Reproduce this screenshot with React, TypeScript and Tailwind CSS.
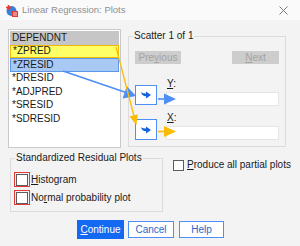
import React from "react";

const vars = ["DEPENDNT", "*ZPRED", "*ZRESID", "*DRESID", "*ADJPRED", "*SRESID", "*SDRESID"];

const MoveIcon = () => (
  <svg width="10" height="8" viewBox="0 0 10 8">
    <path d="M0 1.2 Q1 5.2 5 5.2 L5 7.6 L10 4 L5 0.4 L5 2.6 Q2 2.6 0 1.2Z" fill="#1462dc" />
  </svg>
);

const Box = () => <span className="block w-[12px] h-[12px] border border-[#5c5c5c] bg-white" />;

const App: React.FC = () => {
  return (
    <div className="relative w-[300px] h-[246px] overflow-hidden bg-[#f3f3f3] text-[10px] leading-[12px] text-[#1a1a1a] font-['Liberation_Sans',Arial,sans-serif]">
      {/* title bar */}
      <div className="h-[20px] bg-[#fafafa] flex items-center">
        <svg className="ml-[5px]" width="13" height="13" viewBox="0 0 13 13">
          <circle cx="6.5" cy="7" r="5" fill="#3c7fd6" />
          <path d="M1 3.5 H6 M3.5 1 V6" stroke="#e53935" strokeWidth="1.6" />
          <rect x="7" y="7" width="6" height="6" fill="#e53935" />
          <path d="M8 9 H12 M8 11 H12" stroke="#fff" strokeWidth="0.8" />
        </svg>
        <span className="ml-[4px] text-[9.5px] text-[#8f8f8f]">Linear Regression: Plots</span>
        <svg className="ml-auto mr-[12px]" width="9" height="9" viewBox="0 0 9 9">
          <path d="M0.5 0.5 L8.5 8.5 M8.5 0.5 L0.5 8.5" stroke="#7a7a7a" strokeWidth="1" />
        </svg>
      </div>

      {/* variables + scatter */}
      <div className="flex items-start">
        <div className="ml-[8px] mt-[9px] w-[113px] h-[119px] bg-white border border-[#c9c9c9] pt-[1px] px-[1px]">
          {vars.map((v, i) => (
            <div
              key={v}
              className={
                "h-[13.5px] pl-[2px] flex items-center " +
                (i === 0
                  ? "bg-[#c6c6c6]"
                  : i === 1
                  ? "bg-[#ffff66] border border-[#f2b705]"
                  : i === 2
                  ? "bg-[#a9c9f5] border border-[#5b97ea]"
                  : "")
              }
            >
              {v}
            </div>
          ))}
        </div>

        <fieldset className="ml-[7px] mt-[10px] w-[158px] border border-[#dcdcdc] px-[6px] pb-[6px]">
          <legend className="ml-[-2px] px-[1px]">Scatter 1 of 1</legend>
          <div className="mt-[9px] flex justify-between">
            <div className="w-[46px] h-[13px] bg-[#cdcdcd] text-[#a3a3a3] flex items-center justify-center">
              <span>
                Pre<span className="underline">v</span>ious
              </span>
            </div>
            <div className="w-[47px] h-[13px] bg-[#cdcdcd] text-[#a3a3a3] flex items-center justify-center">
              <span>
                <span className="underline">N</span>ext
              </span>
            </div>
          </div>

          <div className="mt-[13.5px] flex items-end">
            <div className="w-[22px] h-[20px] mb-[1px] border border-[#4d8ef7] bg-white flex items-center justify-center">
              <MoveIcon />
            </div>
            <div className="ml-[9px] flex flex-col">
              <span className="pl-[1px] h-[12px]">
                <span className="underline">Y</span>:
              </span>
              <div className="mt-[2.5px] w-[113px] h-[14px] bg-white border border-[#e6e6e6]" />
            </div>
          </div>

          <div className="mt-[5.5px] flex items-end">
            <div className="w-[22px] h-[21px] border border-[#4d8ef7] bg-white flex items-center justify-center">
              <MoveIcon />
            </div>
            <div className="ml-[9px] flex flex-col">
              <span className="pl-[1px] h-[12px]">
                <span className="underline">X</span>:
              </span>
              <div className="mt-[2.5px] w-[113px] h-[14px] bg-white border border-[#e6e6e6]" />
            </div>
          </div>
        </fieldset>
      </div>

      {/* residual plots + partial */}
      <div className="flex items-start mt-[4px]">
        <fieldset className="ml-[10px] w-[153px] border border-[#dcdcdc] pl-[3px] pb-[6px]">
          <legend className="ml-[1px] px-[1px]">Standardized Residual Plots</legend>
          <div className="mt-[8px] flex items-center">
            <span className="w-[16px] h-[15px] border border-[#e53935] flex items-center justify-center">
              <Box />
            </span>
            <span className="ml-[1px]">
              <span className="underline">H</span>istogram
            </span>
          </div>
          <div className="mt-[3px] flex items-center">
            <span className="w-[16px] h-[15px] border border-[#e53935] flex items-center justify-center">
              <Box />
            </span>
            <span className="ml-[1px]">
              No<span className="underline">r</span>mal probability plot
            </span>
          </div>
        </fieldset>

        <div className="ml-[10px] mt-[7px] flex items-center">
          <span className="block w-[11px] h-[11px] border border-[#5c5c5c] bg-white" />
          <span className="ml-[3px]">
            <span className="underline">P</span>roduce all partial plots
          </span>
        </div>
      </div>

      {/* buttons */}
      <div className="mt-[8px] flex items-center justify-center pl-[1px]">
        <div className="w-[47px] h-[19px] bg-[#1469f2] text-white flex items-center justify-center">
          <span>
            <span className="underline">C</span>ontinue
          </span>
        </div>
        <div className="ml-[4px] w-[46px] h-[17px] bg-white border border-[#4d8ef7] text-[#2a66cc] flex items-center justify-center">
          Cancel
        </div>
        <div className="ml-[5px] w-[45px] h-[17px] bg-white border border-[#4d8ef7] text-[#2a66cc] flex items-center justify-center">
          Help
        </div>
      </div>

      {/* connector arrows drawn over the dialog */}
      <svg className="absolute left-0 top-0 pointer-events-none" width="300" height="246" viewBox="0 0 300 246">
        <line x1="63" y1="71" x2="126" y2="92.5" stroke="#4d8ef7" strokeWidth="1.6" />
        <polygon points="136,96 122.6,98.4 126.8,86.2" fill="#4d8ef7" />
        <line x1="158" y1="99" x2="165" y2="99" stroke="#4d8ef7" strokeWidth="1.6" />
        <polygon points="164,93.5 176,99 164,104.5" fill="#4d8ef7" />

        <line x1="116" y1="47" x2="134" y2="116" stroke="#fbbc04" strokeWidth="1.3" />
        <polygon points="136.5,125 129.5,116.5 137.7,114.3" fill="#fbbc04" />
        <line x1="158" y1="131.5" x2="165" y2="131.5" stroke="#fbbc04" strokeWidth="1.6" />
        <polygon points="164,126 176,131.5 164,137" fill="#fbbc04" />
      </svg>
    </div>
  );
};

export default App;
